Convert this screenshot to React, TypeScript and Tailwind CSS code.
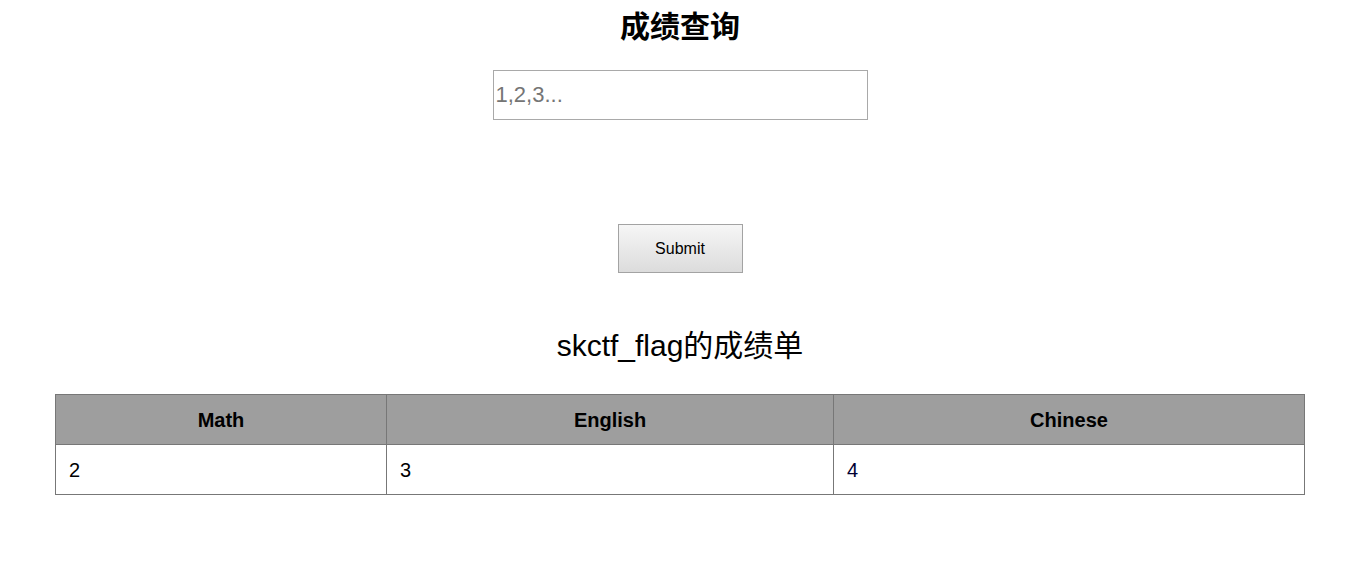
import React from 'react';

const scores = { math: 2, english: 3, chinese: 4 };

export default function App() {
  return (
    <main className="min-h-screen bg-white pl-[15px] text-black font-['Liberation_Sans','Noto_Sans_CJK_SC',sans-serif]">
      {/* Header */}
      <h1 className="mt-[10px] text-center text-[30px] leading-[34px] font-bold">成绩查询</h1>

      <form className="flex flex-col items-center" onSubmit={(e) => e.preventDefault()}>
        <input
          type="text"
          placeholder="1,2,3..."
          className="mt-[26px] h-[50px] w-[375px] border border-[#a9a9a9] px-[2px] text-[22px] text-black outline-none placeholder:text-[#757575]"
        />
        <button
          type="submit"
          className="mt-[104px] h-[49px] w-[125px] border border-[#a3a3a3] bg-gradient-to-b from-[#f6f6f6] to-[#dcdcdc] text-[16px] text-black"
        >
          Submit
        </button>
      </form>

      <h2 className="mt-[56px] text-center text-[30px] leading-[34px] font-normal">skctf_flag的成绩单</h2>

      {/* Score table */}
      <table className="mx-[40px] mt-[31px] w-[1250px] border-collapse text-[20px]">
        <thead>
          <tr className="h-[50px] bg-[#9e9e9e]">
            <th className="w-[331px] border border-[#777] font-bold">Math</th>
            <th className="w-[447px] border border-[#777] font-bold">English</th>
            <th className="border border-[#777] font-bold">Chinese</th>
          </tr>
        </thead>
        <tbody>
          <tr className="h-[50px]">
            <td className="border border-[#777] px-[13px]">{scores.math}</td>
            <td className="border border-[#777] px-[13px]">{scores.english}</td>
            <td className="border border-[#777] px-[13px] text-[#000033]">{scores.chinese}</td>
          </tr>
        </tbody>
      </table>
    </main>
  );
}
